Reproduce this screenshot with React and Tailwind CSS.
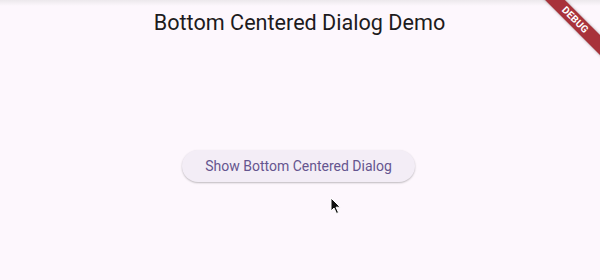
import React from "react";

const App = () => {
  return (
    <div className="relative w-[600px] h-[280px] overflow-hidden bg-[#fdf7fd] font-['Roboto',sans-serif]">
      {/* top edge shade */}
      <div className="absolute inset-x-0 top-0 h-[6px] bg-gradient-to-b from-[#ece8ec] to-transparent" />

      <div className="flex flex-col h-full">
        <header className="h-[44px] flex items-center justify-center pt-[1px] pr-[1px]">
          <h1 className="text-[21.6px] leading-none text-[#1d1b20]">Bottom Centered Dialog Demo</h1>
        </header>
        <main className="flex-1 flex items-start justify-center pt-[106px] pr-[3px]">
          <button className="h-[32px] w-[233px] rounded-full bg-[#f3edf6] text-[#65558f] text-[14px] shadow-[0_1px_2px_rgba(0,0,0,0.25)] flex items-center justify-center">
            Show Bottom Centered Dialog
          </button>
        </main>
      </div>

      {/* mouse cursor */}
      <svg className="absolute left-[330px] top-[197px]" width="12" height="18" viewBox="0 0 12 18">
        <path d="M1 1 L1 14 L4 11 L6.5 16.5 L8.5 15.5 L6 10.2 L10.2 10.2 Z" fill="#111" stroke="#fff" strokeWidth="1" strokeLinejoin="round" />
      </svg>

      {/* debug banner */}
      <div className="absolute top-[13px] right-[-23px] w-[96px] h-[14px] rotate-45 bg-[#a8323a] flex items-center justify-center shadow-[0_0_3px_rgba(0,0,0,0.35)]">
        <span className="text-white text-[10px] font-bold leading-none tracking-[0.2px]">DEBUG</span>
      </div>
    </div>
  );
};

export default App;
